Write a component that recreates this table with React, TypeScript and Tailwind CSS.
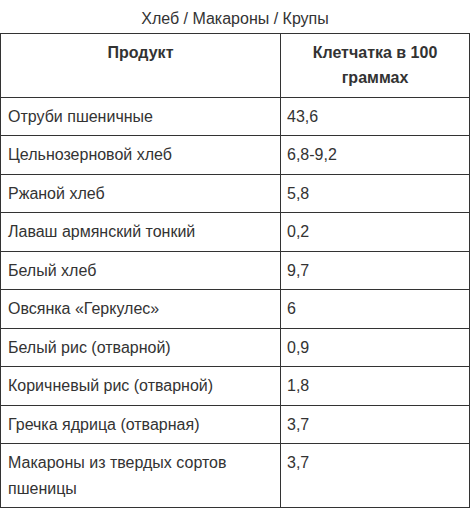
import React from 'react';

const rows: [string, string][] = [
  ['Отруби пшеничные', '43,6'],
  ['Цельнозерновой хлеб', '6,8-9,2'],
  ['Ржаной хлеб', '5,8'],
  ['Лаваш армянский тонкий', '0,2'],
  ['Белый хлеб', '9,7'],
  ['Овсянка «Геркулес»', '6'],
  ['Белый рис (отварной)', '0,9'],
  ['Коричневый рис (отварной)', '1,8'],
  ['Гречка ядрица (отварная)', '3,7'],
  ['Макароны из твердых сортов пшеницы', '3,7'],
];

export default function App() {
  return (
    <div className="bg-white w-[472px] h-[510px] text-[16px] leading-[25.5px] text-[#333] font-['Liberation_Sans',Arial,sans-serif]">
      <table className="w-[470px] border-collapse table-fixed">
        <caption className="pt-[6px] pb-[1px] text-center">Хлеб / Макароны / Крупы</caption>
        <colgroup>
          <col className="w-[280px]" />
          <col />
        </colgroup>
        <thead>
          <tr>
            <th className="border border-[#333] px-[8px] py-[6px] align-top text-center font-bold">Продукт</th>
            <th className="border border-[#333] px-[8px] py-[6px] align-top text-center font-bold">Клетчатка в 100 граммах</th>
          </tr>
        </thead>
        <tbody>
          {rows.map(([name, value]) => (
            <tr key={name}>
              <td className="border border-[#333] px-[7px] py-[6px] align-top">{name}</td>
              <td className="border border-[#333] px-[6px] py-[6px] align-top">{value}</td>
            </tr>
          ))}
        </tbody>
      </table>
    </div>
  );
}
